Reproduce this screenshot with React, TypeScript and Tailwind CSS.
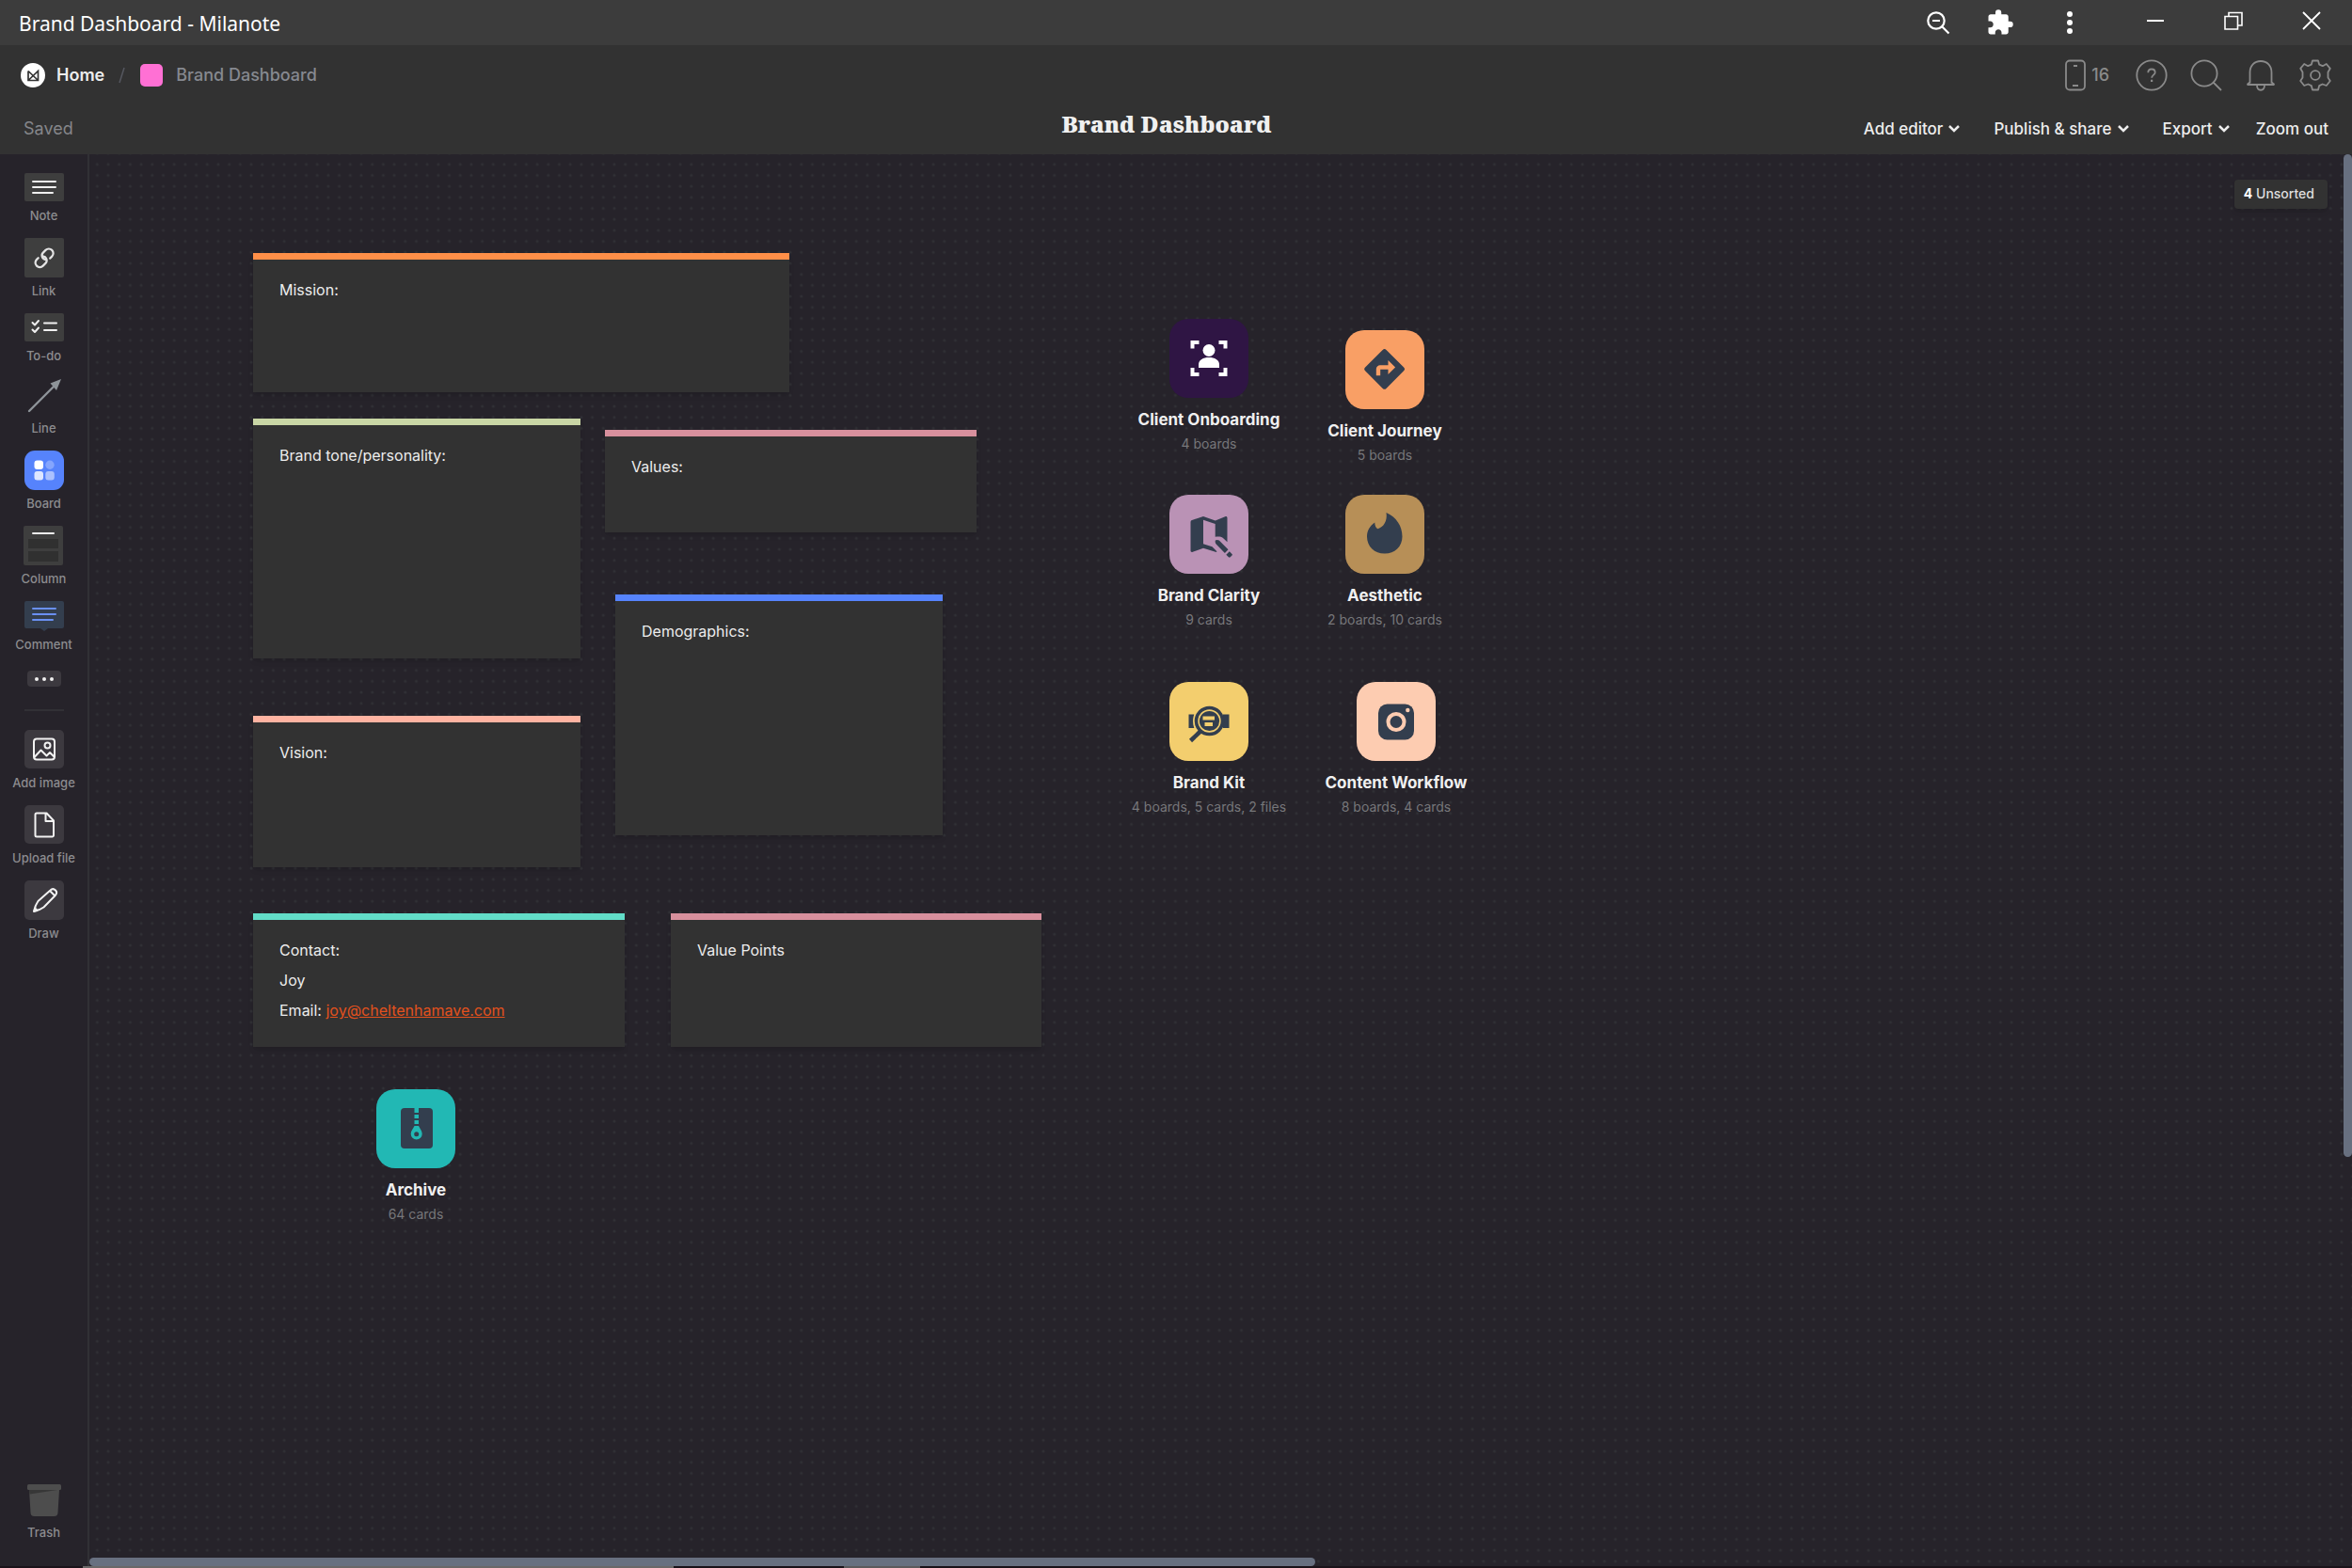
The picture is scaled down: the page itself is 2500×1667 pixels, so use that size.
import type { ReactNode } from 'react'

interface NoteCard {
  id: string
  box: string
  bar: string
  lines: ReactNode[]
}

interface BoardItem {
  id: string
  title: string
  meta: string
  pos: string
  color: string
  icon: ReactNode
}

interface Tool {
  label: string
  icon: ReactNode
}

// Notes on the canvas
const NOTES: NoteCard[] = [
  { id: 'mission', box: 'left-[174px] top-[105px] w-[570px] h-[148px]', bar: 'bg-[#ff8f48]', lines: ['Mission:'] },
  { id: 'tone', box: 'left-[174px] top-[281px] w-[348px] h-[255px]', bar: 'bg-[#c9d6a5]', lines: ['Brand tone/personality:'] },
  { id: 'values', box: 'left-[548px] top-[293px] w-[395px] h-[109px]', bar: 'bg-[#d8909d]', lines: ['Values:'] },
  { id: 'demographics', box: 'left-[559px] top-[468px] w-[348px] h-[256px]', bar: 'bg-[#5683fc]', lines: ['Demographics:'] },
  { id: 'vision', box: 'left-[174px] top-[597px] w-[348px] h-[161px]', bar: 'bg-[#ffb3a1]', lines: ['Vision:'] },
  {
    id: 'contact',
    box: 'left-[174px] top-[807px] w-[395px] h-[142px]',
    bar: 'bg-[#62ddc8]',
    lines: [
      'Contact:',
      'Joy',
      <>
        Email:{' '}
        <a href="mailto:joy@cheltenhamave.com" className="text-[#e2511d] underline">joy@cheltenhamave.com</a>
      </>,
    ],
  },
  { id: 'points', box: 'left-[618px] top-[807px] w-[394px] h-[142px]', bar: 'bg-[#d8909d]', lines: ['Value Points'] },
]

// Boards on the canvas, every icon is drawn on the 84px tile
const BOARDS: BoardItem[] = [
  {
    id: 'onboarding', title: 'Client Onboarding', meta: '4 boards', pos: 'left-[1090px] top-[175px]', color: 'bg-[#2f1544]',
    icon: (
      <g fill="#fff">
        <path d="M22.5 23h9v4h-5v4.500h-4zM52.500 23h9v8.500h-4v-4.500h-5zM22.500 52h4v5h5v4h-9zM57.500 52h4v9h-9v-4h5z" />
        <circle cx="42" cy="33.500" r="6.500" />
        <path d="M31 52v-3.500c0-5 5-7.500 11-7.500s11 2.500 11 7.500V52z" />
      </g>
    ),
  },
  {
    id: 'journey', title: 'Client Journey', meta: '5 boards', pos: 'left-[1277px] top-[187px]', color: 'bg-[#f99f65]',
    icon: (
      <path fillRule="evenodd" fill="#333e4e" d="M43.500 20.900l18.600 18.600a2.700 2.700 0 0 1 0 3.800L43.500 61.900a2.700 2.700 0 0 1-3.800 0L21.100 43.300a2.700 2.700 0 0 1 0-3.800l18.600-18.600a2.700 2.700 0 0 1 3.800 0zM45.500 32v5.300H37a4.200 4.200 0 0 0-4.200 4.200v6.800h4.400v-6.600h8.300v5.200l7.600-7.400z" />
    ),
  },
  {
    id: 'clarity', title: 'Brand Clarity', meta: '9 cards', pos: 'left-[1090px] top-[362px]', color: 'bg-[#ba92b5]',
    icon: (
      <g fill="#333e4e">
        <path d="M36 23.100l12.800 4.300 10.400-4.200c1.200-.5 2.300.1 2.300 1.400v25.700l-4.800-4.600c-1.500-1.400-5-1.400-8-1V31L36 26.800v25.500l9.500 3 4.700 4.800c.5.700-.2 1-1.200.7L36 56.700l-11.200 4c-1.300.5-2.300-.1-2.300-1.400V29.100c0-1 .5-1.800 1.500-2.200z" />
        <path d="M48.800 48.500c1-.8 2.800-.7 4 0l9.700 9.700-3.600 3.700-9-9.100c-1.200-1.300-1.400-3-1.100-4.300z" />
        <path d="M63.800 60.300l2.700 2.600c.6.600.6 1 0 1.600L64.700 66.300c-.6.600-1.200.6-1.800 0l-2.600-2.600z" />
      </g>
    ),
  },
  {
    id: 'aesthetic', title: 'Aesthetic', meta: '2 boards, 10 cards', pos: 'left-[1277px] top-[362px]', color: 'bg-[#b78f57]',
    icon: (
      <path fill="#333e4e" d="M43.500 19C54 23.500 60.500 33 60.500 44.500c0 10.700-8 18-18.700 18S23 55.200 23 44.500c0-6 3-11.500 8.200-15 .3 3.500 1 5.500 3.300 6.700C40.500 34.500 45 28 43.500 19z" />
    ),
  },
  {
    id: 'kit', title: 'Brand Kit', meta: '4 boards, 5 cards, 2 files', pos: 'left-[1090px] top-[561px]', color: 'bg-[#f3ce6e]',
    icon: (
      <g>
        <path fill="#333e4e" d="M20.500 34.500h5.800c-1.700 4.600-1.700 9.600 0 14.500h-5.800zM57 34.500h6.500V49H57z" />
        <circle cx="42.500" cy="41.500" r="14" fill="#f3ce6e" stroke="#333e4e" strokeWidth="3.600" />
        <circle cx="42.500" cy="41.500" r="10.600" fill="#333e4e" />
        <path stroke="#333e4e" strokeWidth="4.500" d="M33 52.500L22.500 62.500" />
        <path fill="#f3ce6e" d="M35.500 36.500h12.500v4h-12.500zM37.500 43H46v4h-8.500z" />
      </g>
    ),
  },
  {
    id: 'workflow', title: 'Content Workflow', meta: '8 boards, 4 cards', pos: 'left-[1289px] top-[561px]', color: 'bg-[#fdccb1]',
    icon: (
      <g>
        <rect x="23" y="23.500" width="38" height="38" rx="9.500" fill="#333e4e" />
        <circle cx="42" cy="42.500" r="8.500" fill="none" stroke="#fdccb1" strokeWidth="4" />
        <circle cx="54.300" cy="30" r="2.200" fill="#fdccb1" />
      </g>
    ),
  },
  {
    id: 'archive', title: 'Archive', meta: '64 cards', pos: 'left-[247px] top-[994px]', color: 'bg-[#22b8b4]',
    icon: (
      <g>
        <rect x="26" y="20" width="34" height="43" rx="4" fill="#333e4e" />
        <path fill="#22b8b4" d="M40.500 20h4.500v5h-4.500zM40.500 27h4.500v4h-4.500zM40.500 33h4.500v4h-4.500z" />
        <path fillRule="evenodd" fill="#22b8b4" d="M40.500 39h4.500c1.500 3.500 3.700 5 3.700 8.500a6 6 0 1 1-12 0c0-3.500 2.300-5 3.800-8.500zM42.700 45.300a2.500 2.500 0 1 0 0 5 2.500 2.500 0 0 0 0-5z" />
      </g>
    ),
  },
]

const TOOLS: Tool[] = [
  {
    label: 'Note',
    icon: (
      <svg width="42" height="31" fill="none" stroke="#f0f0f0" strokeWidth="2" strokeLinecap="round">
        <rect width="42" height="30" rx="2" fill="#3e3e3e" stroke="none" />
        <path d="M9 9h24M9 15h24M9 21h21" />
      </svg>
    ),
  },
  {
    label: 'Link',
    icon: (
      <svg width="42" height="42" fill="none" stroke="#e4e4e4" strokeWidth="2.200" strokeLinecap="round">
        <rect width="42" height="42" rx="2" fill="#3e3e3e" stroke="none" />
        <path d="M22.800 23.200c-1.800-.2-3.400-1.400-4-3-.6-1.800-.2-3.400 1-4.600l2.700-2.700c1.900-1.900 4.800-1.900 6.700 0s1.900 4.800 0 6.700l-2 2" />
        <path d="M19.400 19.300c1.800.2 3.300 1.300 4 3 .6 1.800.2 3.400-1 4.600l-2.700 2.700c-1.900 1.900-4.800 1.900-6.700 0s-1.900-4.800 0-6.700l1.700-1.700" />
      </svg>
    ),
  },
  {
    label: 'To-do',
    icon: (
      <svg width="42" height="31" fill="none" stroke="#f0f0f0" strokeWidth="2" strokeLinecap="round" strokeLinejoin="round">
        <rect width="42" height="30" rx="2" fill="#3e3e3e" stroke="none" />
        <path d="M8.500 10l2.500 2.500 4-4.500M8.500 17.500l2.500 2.500 4-4.500M21 10.500h13M21 18h13" />
      </svg>
    ),
  },
  {
    label: 'Line',
    icon: (
      <svg width="42" height="39" fill="none" stroke="#8e9499" strokeWidth="2.400" strokeLinecap="round">
        <path d="M5 35L33 7" />
        <path d="M39 1l-5 12-6.500-7.500z" fill="#8e9499" stroke="none" />
      </svg>
    ),
  },
  {
    label: 'Board',
    icon: (
      <svg width="42" height="42" fill="#fff">
        <rect width="42" height="42" rx="11" fill="#5683fc" />
        <rect x="10.500" y="10.500" width="9.500" height="9.500" rx="3" />
        <circle cx="27" cy="15.200" r="4.700" opacity=".28" />
        <rect x="10.500" y="22" width="9.500" height="9.500" rx="3" opacity=".8" />
        <rect x="22.300" y="22" width="9.500" height="9.500" rx="3" opacity=".5" />
      </svg>
    ),
  },
  {
    label: 'Column',
    icon: (
      <svg width="42" height="42">
        <rect width="42" height="42" rx="2" fill="#3e3e3e" />
        <path d="M10 8h22" stroke="#f0f0f0" strokeWidth="2" strokeLinecap="round" />
        <path d="M5 14h32v10H5zM5 27h32v11H5z" fill="#303030" />
      </svg>
    ),
  },
  {
    label: 'Comment',
    icon: (
      <svg width="42" height="32" fill="none" stroke="#6a90f2" strokeWidth="2" strokeLinecap="round">
        <path d="M2 0h38a2 2 0 0 1 2 2v25a2 2 0 0 1-2 2H25l-4 3-4-3H2a2 2 0 0 1-2-2V2a2 2 0 0 1 2-2z" fill="#333e4e" stroke="none" />
        <path d="M9 8h24M9 14h24M9 20h21" />
      </svg>
    ),
  },
]

const UPLOAD_TOOLS: Tool[] = [
  {
    label: 'Add image',
    icon: (
      <svg width="42" height="42" fill="none" stroke="#f2f2f2" strokeWidth="2" strokeLinejoin="round">
        <rect width="42" height="41" rx="5" fill="#3c393f" stroke="none" />
        <rect x="10" y="9.500" width="22" height="22" rx="3" />
        <circle cx="24.500" cy="16.500" r="3" />
        <path d="M10.500 29l7-7.500 6 6 3.500-3.500 5 5" />
      </svg>
    ),
  },
  {
    label: 'Upload file',
    icon: (
      <svg width="42" height="42" fill="none" stroke="#f2f2f2" strokeWidth="2" strokeLinejoin="round">
        <rect width="42" height="41" rx="5" fill="#3c393f" stroke="none" />
        <path d="M13 8.500h10.500l7.500 8V32a1.500 1.500 0 0 1-1.500 1.500H13A1.500 1.500 0 0 1 11.500 32V10A1.500 1.500 0 0 1 13 8.500zM22.500 8.500v8.500H31" />
      </svg>
    ),
  },
  {
    label: 'Draw',
    icon: (
      <svg width="42" height="42" fill="none" stroke="#f2f2f2" strokeWidth="2" strokeLinejoin="round">
        <rect width="42" height="42" rx="5" fill="#3c393f" stroke="none" />
        <path d="M10.500 32.500c.3-3.500 1.500-7 4-10.500L27.500 10.500c2-2 4-1.500 5.500 0s1.500 3.500-.3 5.500L20.500 28.500c-3.500 2.600-6.500 3.700-10 4zM27 11l5 5" />
        <path d="M10 33l1-3.500 2.500 2.500z" fill="#f2f2f2" />
      </svg>
    ),
  },
]

const MENUS = ['Add editor', 'Publish & share', 'Export']

function TitleBar() {
  return (
    <div className="flex h-12 shrink-0 items-center justify-between bg-[#3c3c3c] pl-5 text-white">
      <span className="pt-[2px] font-['Noto_Sans',sans-serif] text-[21px] leading-6">Brand Dashboard - Milanote</span>
      <div className="flex h-full items-center">
        <button aria-label="Zoom" className="flex w-20 justify-center">
          <svg width="26" height="26" fill="none" stroke="#fff" strokeWidth="2.200">
            <circle cx="11" cy="11" r="8.700" />
            <path d="M17.500 17.500l7 7M7 11h8" />
          </svg>
        </button>
        <button aria-label="Extensions" className="flex w-[52px] justify-center">
          <svg width="30" height="30" viewBox="0 0 24 24" fill="#fff">
            <path d="M20.500 11H19V7c0-1.100-.9-2-2-2h-4V3.500a2.500 2.500 0 0 0-5 0V5H4c-1.100 0-1.990.9-1.990 2v3.800H3.500c1.490 0 2.700 1.210 2.700 2.700s-1.210 2.700-2.700 2.700H2V20c0 1.100.9 2 2 2h3.800v-1.500c0-1.490 1.210-2.700 2.700-2.700s2.700 1.210 2.700 2.700V22H17c1.100 0 2-.9 2-2v-4h1.500a2.500 2.500 0 0 0 0-5z" />
          </svg>
        </button>
        <button aria-label="More" className="flex w-24 justify-center">
          <svg width="8" height="26" fill="#fff">
            <circle cx="4" cy="4" r="3" />
            <circle cx="4" cy="13" r="3" />
            <circle cx="4" cy="22" r="3" />
          </svg>
        </button>
        <button aria-label="Minimize" className="flex w-[86px] justify-center pb-1">
          <svg width="20" height="20" stroke="#fff" strokeWidth="2"><path d="M1 10h18" /></svg>
        </button>
        <button aria-label="Restore" className="flex w-20 justify-center pb-1">
          <svg width="20" height="20" fill="none" stroke="#fff" strokeWidth="1.600">
            <path d="M1 5.500h13.500V19H1zM5 5.500V1.500h14V15h-4.500" />
          </svg>
        </button>
        <button aria-label="Close" className="flex w-[86px] justify-center pb-1">
          <svg width="20" height="20" stroke="#fff" strokeWidth="1.800"><path d="M1 1l18 18M19 1L1 19" /></svg>
        </button>
      </div>
    </div>
  )
}

function Header() {
  return (
    <header className="shrink-0 bg-[#323232]">
      <div className="flex h-[63px] items-center justify-between px-[22px]">
        <nav className="flex items-center text-[18px] font-medium leading-6">
          <a href="#home" className="flex items-center gap-3 font-semibold text-[#ededed]">
            <svg width="26" height="26" fill="none" stroke="#333" strokeWidth="1.700">
              <circle cx="13" cy="13" r="13" fill="#fff" stroke="none" />
              <path d="M8 8.500v10h10.500v-10L8 18.500M8 8.500l10.500 10" />
            </svg>
            Home
          </a>
          <svg width="8" height="18" className="mx-[15px]" stroke="#55575f" strokeWidth="1.500"><path d="M6 1L1 17" /></svg>
          <span className="size-6 rounded-[5px] bg-[#ff70d4]" />
          <span className="ml-[14px] text-[#868990]">Brand Dashboard</span>
        </nav>
        <div className="flex items-center gap-6 text-[#8a8a8a]">
          <button aria-label="Phone" className="flex items-center gap-[6px] pr-1 text-[18px] font-medium leading-6">
            <svg width="22" height="34" fill="none" stroke="currentColor" strokeWidth="1.800">
              <rect x="1" y="1.500" width="20" height="31" rx="4" />
              <path d="M9 7h4M8 28h6" />
            </svg>
            16
          </button>
          <button aria-label="Help">
            <svg width="34" height="34" fill="none" stroke="currentColor" strokeWidth="1.800">
              <circle cx="17" cy="17" r="15.700" />
              <path d="M13.300 14.200c0-2.300 1.500-3.700 3.700-3.700s3.700 1.400 3.700 3.400c0 2.600-3.500 2.800-3.500 5.800" />
              <path d="M17.100 21.700v2.300" strokeWidth="2.200" />
            </svg>
          </button>
          <button aria-label="Search">
            <svg width="34" height="34" fill="none" stroke="currentColor" strokeWidth="1.800">
              <circle cx="15" cy="15" r="13.600" />
              <path d="M24.500 24.500l8.500 8.500" />
            </svg>
          </button>
          <button aria-label="Notifications">
            <svg width="34" height="34" fill="none" stroke="currentColor" strokeWidth="1.800" strokeLinejoin="round">
              <path d="M5.500 25.500V14c0-7 4.500-12 11.500-12s11.500 5 11.500 12v11.500M2.500 27l3.500-3M31.500 27L28 24M2.500 27h29M13 27.500c0 7 8 7 8 0" />
            </svg>
          </button>
          <button aria-label="Settings">
            <svg width="34" height="34" fill="none" stroke="currentColor" strokeWidth="1.800" strokeLinejoin="round">
              <path d="M14 1.500h6l1.200 4.200 3.600 1.500 4-2.200 4 4.800-2.300 4v5.700l2.300 3.500-4 5-4.200-1.500-3.400 1.600L20 32.500h-6l-1.200-4.400-3.400-1.600-4.200 1.500-4-5 2.300-3.500v-5.700l-2.300-4 4-4.800 4 2.200 3.600-1.500z" />
              <circle cx="17" cy="17" r="4.900" />
            </svg>
          </button>
        </div>
      </div>
      <div className="grid h-[53px] grid-cols-[1fr_auto_1fr] items-center px-[25px] pb-[2px]">
        <span className="text-[18px] leading-6 text-[#85868a]">Saved</span>
        <h1 className="pb-[10px] pr-5 font-['Noto_Serif','Liberation_Serif',serif] text-[24px] font-black leading-8 text-[#f0f0f0]">Brand Dashboard</h1>
        <div className="flex items-center justify-end gap-7 text-[17px] font-medium leading-6 text-[#ededed]">
          <div className="flex items-center gap-9">
            {MENUS.map((label) => (
              <button key={label} className="flex items-center gap-[6px]">
                {label}
                <svg width="12" height="8" fill="none" stroke="currentColor" strokeWidth="2.500"><path d="M1 1l5 5 5-5" /></svg>
              </button>
            ))}
          </div>
          <button>Zoom out</button>
        </div>
      </div>
    </header>
  )
}

function ToolButton({ label, icon }: Tool) {
  return (
    <button className="flex flex-col items-center gap-[6px] text-[13px] font-medium leading-4 text-[#8c8c8f]">
      {icon}
      {label}
    </button>
  )
}

function Sidebar() {
  return (
    <aside className="flex w-[95px] shrink-0 flex-col items-center border-r-2 border-[#313035] pb-7 pt-5">
      <div className="flex flex-col items-center gap-4">
        {TOOLS.map((tool) => (
          <ToolButton key={tool.label} {...tool} />
        ))}
      </div>
      <button aria-label="More tools" className="mt-5 flex h-[17px] w-9 items-center justify-center gap-1 rounded bg-[#3c393f]">
        <span className="size-1 rounded-full bg-[#f0f0f0]" />
        <span className="size-1 rounded-full bg-[#f0f0f0]" />
        <span className="size-1 rounded-full bg-[#f0f0f0]" />
      </button>
      <hr className="mb-5 mt-6 w-[42px] border-t-2 border-[#313035]" />
      <div className="flex flex-col items-center gap-4">
        {UPLOAD_TOOLS.map((tool) => (
          <ToolButton key={tool.label} {...tool} />
        ))}
      </div>
      <div className="mt-auto">
        <ToolButton
          label="Trash"
          icon={
            <svg width="36" height="37">
              <path d="M2 6h32l-1.500 24a4 4 0 0 1-4 4h-21a4 4 0 0 1-4-4z" fill="#4d4d4d" />
              <path d="M2 6h30L2.500 10.500z" fill="#373737" />
              <rect width="36" height="6" rx="1.500" fill="#4d4d4d" />
            </svg>
          }
        />
      </div>
    </aside>
  )
}

function Note({ box, bar, lines }: NoteCard) {
  return (
    <article className={`absolute bg-[#323232] shadow-md ${box}`}>
      <div className={`h-[7px] ${bar}`} />
      <div className="space-y-2 px-7 pt-5 text-[16px] leading-6 text-[#ededed]">
        {lines.map((line, i) => (
          <p key={i}>{line}</p>
        ))}
      </div>
    </article>
  )
}

function Board({ title, meta, pos, color, icon }: BoardItem) {
  return (
    <a href="#board" className={`absolute flex w-[200px] flex-col items-center ${pos}`}>
      <span className={`rounded-[20px] ${color}`}>
        <svg width="84" height="84">{icon}</svg>
      </span>
      <span className="mt-[11px] text-[17px] font-bold leading-6 text-[#f0f0f0]">{title}</span>
      <span className="mt-[2px] text-[14px] leading-6 text-[#77777a]">{meta}</span>
    </a>
  )
}

export default function App() {
  return (
    <div className="flex h-screen flex-col overflow-hidden bg-[#26232a] font-['Inter',sans-serif]">
      <TitleBar />
      <Header />
      <div className="flex min-h-0 flex-1">
        <Sidebar />
        <main className="relative min-w-0 flex-1 overflow-hidden">
          {/* Dot grid */}
          <svg className="absolute inset-0 size-full">
            <defs>
              <pattern id="dots" x="2.500" y="4.850" width="11.694" height="11.694" patternUnits="userSpaceOnUse">
                <circle cx="5.850" cy="5.850" r="1.500" fill="#303035" />
              </pattern>
            </defs>
            <rect width="100%" height="100%" fill="url(#dots)" />
          </svg>
          {NOTES.map((note) => (
            <Note key={note.id} {...note} />
          ))}
          {BOARDS.map((board) => (
            <Board key={board.id} {...board} />
          ))}
          <button className="absolute right-[26px] top-[27px] h-[31px] rounded bg-[#323232] pl-[10px] pr-[14px] pb-[2px] text-[14px] font-medium leading-5 text-[#dedede] shadow-md">
            <b className="text-white">4</b> Unsorted
          </button>
          {/* Scrollbars */}
          <div className="absolute right-0 top-0 h-[1066px] w-[9px] rounded-full bg-[#687080]" />
          <div className="absolute bottom-0 left-0 h-[9px] w-[1303px] rounded-full bg-[#687080]" />
        </main>
      </div>
      {/* Window edge */}
      <div className="flex h-[2px] shrink-0 bg-[#1a1319]">
        <div className="ml-[88px] w-[628px] bg-[#6a6868]" />
        <div className="ml-[181px] w-[81px] bg-[#5c5a5c]" />
      </div>
    </div>
  )
}
